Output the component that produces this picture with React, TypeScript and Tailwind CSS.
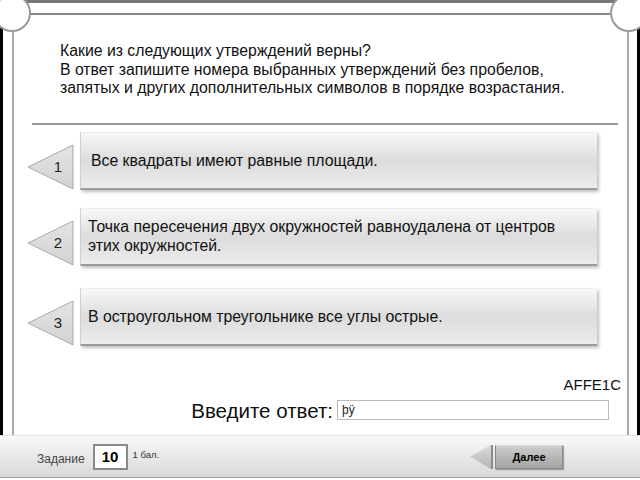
const OPTIONS = [
  { n: "1", lines: ["Все квадраты имеют равные площади."], pl: "pl-[10px]", mt: "mt-[7px]" },
  {
    n: "2",
    lines: ["Точка пересечения двух окружностей равноудалена от центров", "этих окружностей."],
    pl: "pl-[7px]",
    mt: "mt-[18px]",
  },
  { n: "3", lines: ["В остроугольном треугольнике все углы острые."], pl: "pl-[7px]", mt: "mt-[22px]" },
];

function Pointer({ n }: { n: string }) {
  return (
    <svg width="47" height="46" viewBox="0 0 47 46" className="shrink-0">
      <defs>
        <linearGradient id={`p${n}`} x1="0" y1="0" x2="0" y2="1">
          <stop offset="0" stopColor="#e4e4e4" />
          <stop offset="1" stopColor="#d2d2d2" />
        </linearGradient>
      </defs>
      <polygon points="1,23 46,1 46,45" fill={`url(#p${n})`} stroke="#a8a8a8" strokeWidth="1" />
      <text x="31" y="28" fontSize="15" fontFamily="Liberation Sans, Arial, sans-serif" fill="#222" textAnchor="middle">
        {n}
      </text>
    </svg>
  );
}

export default function App() {
  return (
    <div className="w-[640px] h-[480px] bg-white relative overflow-hidden text-[#111]" style={{ fontFamily: '"Liberation Sans", Arial, sans-serif' }}>
      {/* outer frame */}
      <div className="relative h-[435px] border-x-[3px] border-x-black border-t-[3px] border-t-[#777] pt-[10px] pl-[9px] pr-[8px]">
        <div className="absolute -left-[23px] -top-[23px] w-[40px] h-[40px] rounded-full bg-white border-[3px] border-black" />
        <div className="absolute -right-[23px] -top-[23px] w-[40px] h-[40px] rounded-full bg-white border-[3px] border-black" />

        {/* inner frame */}
        <div className="relative h-full border-t-2 border-x-2 border-t-[#888] border-x-[#aaa]">
          <div className="absolute -left-[21px] -top-[21px] w-[38px] h-[38px] rounded-full bg-white border-2 border-[#999]" />
          <div className="absolute -right-[21px] -top-[21px] w-[38px] h-[38px] rounded-full bg-white border-2 border-[#999]" />

          <div className="relative">
            <div className="pt-[27px] pl-[46px] text-[15.8px] leading-[18.5px] text-[#111]">
              <p>Какие из следующих утверждений верны?</p>
              <p>В ответ запишите номера выбранных утверждений без пробелов,</p>
              <p>запятых и других дополнительных символов в порядке возрастания.</p>
            </div>

            <div className="mt-[25px] ml-[18px] mr-[9px] h-[2px] bg-[#999]" />

            {OPTIONS.map((o) => (
              <div key={o.n} className={`flex items-end pl-[13px] ${o.mt}`}>
                <Pointer n={o.n} />
                <div
                  className={`ml-[6px] w-[517px] h-[58px] flex flex-col justify-center ${o.pl} text-[15.8px] leading-[19px] bg-gradient-to-b from-[#f8f8f8] via-[#dcdcdc] to-[#ececec] border-l border-l-[#cfcfcf] border-t border-t-[#eee] border-b-2 border-b-[#9c9c9c] shadow-[2px_2px_3px_rgba(0,0,0,0.25)]`}
                >
                  {o.lines.map((l) => (
                    <div key={l}>{l}</div>
                  ))}
                </div>
              </div>
            ))}

            <div className="mt-[30px] pr-[6px] text-right text-[15px] leading-[17px]">AFFE1C</div>

            <div className="mt-[5px] flex items-center justify-end pr-[18px] h-[24px]">
              <span className="text-[20.5px] leading-[24px] mr-[4px] mt-[3px]">Введите ответ:</span>
              <div className="w-[272px] h-[20px] border border-[#bbb] bg-white pl-[4px] text-[12px] leading-[18px] text-[#222]">
                þÿ
              </div>
            </div>
          </div>
        </div>
      </div>

      {/* footer */}
      <div className="h-[43px] bg-gradient-to-b from-[#f9f9f9] to-[#d9d9d9] border-t border-t-[#e4e4e4] border-b border-b-[#a0a0a0] flex items-center">
        <span className="ml-[37px] text-[12px] text-[#444] mt-[5px]">Задание</span>
        <div className="ml-[8px] w-[35px] h-[26px] mt-[1px] border-2 border-[#8a8a8a] bg-white flex items-center justify-center text-[15px] font-bold text-black">
          10
        </div>
        <span className="ml-[5px] text-[9.5px] text-[#333] -mt-[2px]">1 бал.</span>

        <div className="ml-auto mr-[77px] flex items-center mt-[1px]">
          <svg width="23" height="24" viewBox="0 0 23 24">
            <defs>
              <linearGradient id="tri" x1="0" y1="0" x2="0" y2="1">
                <stop offset="0" stopColor="#dcdcdc" />
                <stop offset="1" stopColor="#b4b4b4" />
              </linearGradient>
            </defs>
            <polygon points="0,11.5 21,0 21,24" fill="url(#tri)" />
            <rect x="21" y="0" width="2" height="24" fill="#8c8c8c" />
          </svg>
          <div className="ml-[2px] w-[68px] h-[24px] bg-gradient-to-b from-[#cdcdcd] via-[#b8b8b8] to-[#a4a4a4] border border-[#8a8a8a] border-t-[#d8d8d8] shadow-[1px_1px_1px_rgba(0,0,0,0.3)] flex items-center justify-center text-[11px] font-bold text-black">
            Далее
          </div>
        </div>
      </div>
    </div>
  );
}
